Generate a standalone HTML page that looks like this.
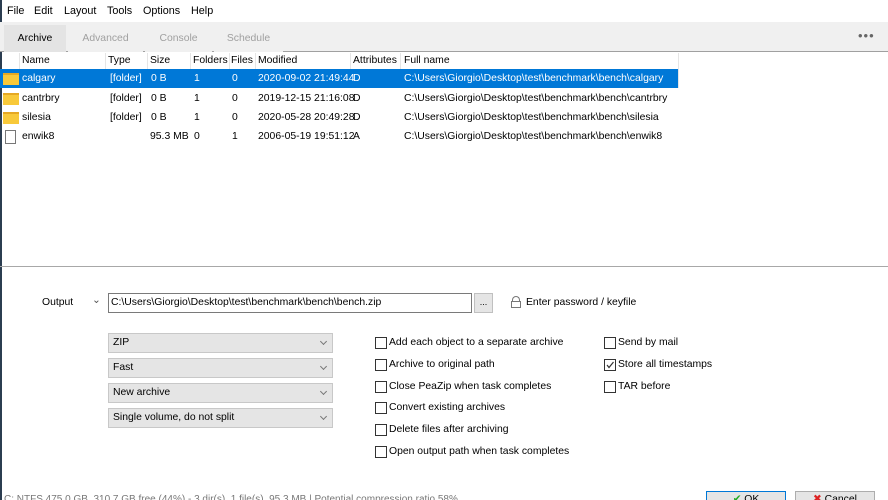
<!DOCTYPE html>
<html><head><meta charset="utf-8"><style>
*{margin:0;padding:0;box-sizing:border-box}
html,body{width:888px;height:500px;overflow:hidden}
body{background:#fff;font-family:"Liberation Sans",sans-serif;font-size:10.4px;color:#000;position:relative}
.a{position:absolute;white-space:nowrap}
.menu span{position:absolute;top:5px;font-size:10.8px}
.tabbar{position:absolute;left:0;top:22px;width:888px;height:30px;background:#f0f0f0;border-bottom:1px solid #a0a0a0}
.tab{position:absolute;top:3px;height:27px;background:#f0f0f0;color:#a0a0a0;text-align:center;line-height:28px}
.hdr{position:absolute;top:53px;height:16px;line-height:16px}
.sep{position:absolute;top:53px;width:1px;height:16px;background:#e5e5e5}
.row{position:absolute;left:0;height:19px;line-height:19px;width:678px}
.row span{position:absolute;white-space:nowrap}
.sel{background:#0078d7;color:#fff}
.fold{position:absolute;left:3px;top:4px;width:16px;height:12px;background:#f8c93a;border-top:2px solid #e5a823}
.dd{position:absolute;left:108px;width:225px;height:20px;background:#e5e5e5;border:1px solid #c8c8c8;line-height:18px;padding-left:4px}
.dd:after{content:"";position:absolute;right:6px;top:5px;width:4px;height:4px;border-right:1px solid #777;border-bottom:1px solid #777;transform:rotate(45deg)}
.cb{position:absolute;width:12px;height:12px;border:1px solid #333;background:#fff}
.cl{position:absolute;white-space:nowrap}
</style></head><body>
<div class="a" style="left:0;top:0;width:2px;height:500px;background:#2b3d50"></div>
<div class="menu"><span style="left:7px">File</span><span style="left:34px">Edit</span><span style="left:64px">Layout</span><span style="left:107px">Tools</span><span style="left:143px">Options</span><span style="left:191px">Help</span></div>
<div class="tabbar">
<div class="tab" style="left:4px;width:62px;background:#e4e4e4;color:#000">Archive</div>
<div class="tab" style="left:68px;width:75px">Advanced</div>
<div class="tab" style="left:145px;width:67px">Console</div>
<div class="tab" style="left:214px;width:69px">Schedule</div>
<div class="a" style="left:858px;top:6px;color:#666;font-size:13px;letter-spacing:1px">•••</div>
</div>
<div class="hdr" style="left:22px">Name</div><div class="hdr" style="left:108px">Type</div><div class="hdr" style="left:150px">Size</div><div class="hdr" style="left:193px">Folders</div><div class="hdr" style="left:231px">Files</div><div class="hdr" style="left:258px">Modified</div><div class="hdr" style="left:353px">Attributes</div><div class="hdr" style="left:404px">Full name</div>
<div class="sep" style="left:19px"></div><div class="sep" style="left:105px"></div><div class="sep" style="left:147px"></div><div class="sep" style="left:190px"></div><div class="sep" style="left:229px"></div><div class="sep" style="left:255px"></div><div class="sep" style="left:350px"></div><div class="sep" style="left:400px"></div>
<div class="a" style="left:678px;top:53px;width:1px;height:35px;background:#e5e5e5"></div>
<div class="row sel" style="top:69px"><i class="fold"></i><span style="left:22px">calgary</span><span style="left:110px">[folder]</span><span style="left:151px">0 B</span><span style="left:194px">1</span><span style="left:232px">0</span><span style="left:258px">2020-09-02 21:49:44</span><span style="left:353px">D</span><span style="left:404px">C:\Users\Giorgio\Desktop\test\benchmark\bench\calgary</span></div>
<div class="row" style="top:89px"><i class="fold"></i><span style="left:22px">cantrbry</span><span style="left:110px">[folder]</span><span style="left:151px">0 B</span><span style="left:194px">1</span><span style="left:232px">0</span><span style="left:258px">2019-12-15 21:16:08</span><span style="left:353px">D</span><span style="left:404px">C:\Users\Giorgio\Desktop\test\benchmark\bench\cantrbry</span></div>
<div class="row" style="top:108px"><i class="fold"></i><span style="left:22px">silesia</span><span style="left:110px">[folder]</span><span style="left:151px">0 B</span><span style="left:194px">1</span><span style="left:232px">0</span><span style="left:258px">2020-05-28 20:49:28</span><span style="left:353px">D</span><span style="left:404px">C:\Users\Giorgio\Desktop\test\benchmark\bench\silesia</span></div>
<div class="row" style="top:127px"><i style="position:absolute;left:5px;top:3px;width:11px;height:14px;border:1px solid #777;background:#fff"></i><span style="left:22px">enwik8</span><span style="left:150px">95.3 MB</span><span style="left:194px">0</span><span style="left:232px">1</span><span style="left:258px">2006-05-19 19:51:12</span><span style="left:353px">A</span><span style="left:404px">C:\Users\Giorgio\Desktop\test\benchmark\bench\enwik8</span></div>
<div class="a" style="left:0;top:266px;width:888px;height:1px;background:#a8a8a8"></div>
<div class="a" style="left:42px;top:297px">Output</div>
<div class="a" style="left:92px;top:294px;color:#555">&#x2304;</div>
<div class="a" style="left:108px;top:293px;width:364px;height:20px;border:1px solid #7a7a7a;line-height:18px;padding-left:2px">C:\Users\Giorgio\Desktop\test\benchmark\bench\bench.zip</div>
<div class="a" style="left:474px;top:293px;width:19px;height:20px;border:1px solid #c0c0c0;background:#e5e5e5;text-align:center;line-height:16px;font-size:9px">...</div>
<div class="a" style="left:512px;top:296px;width:8px;height:6px;border:1px solid #777;border-bottom:none;border-radius:4px 4px 0 0"></div>
<div class="a" style="left:511px;top:301px;width:10px;height:7px;border:1px solid #777"></div>
<div class="a" style="left:526px;top:297px">Enter password / keyfile</div>
<div class="dd" style="top:333px">ZIP</div>
<div class="dd" style="top:358px">Fast</div>
<div class="dd" style="top:383px">New archive</div>
<div class="dd" style="top:408px">Single volume, do not split</div>
<div class="cb" style="left:375px;top:337px"></div><div class="cl" style="left:389px;top:337px">Add each object to a separate archive</div>
<div class="cb" style="left:375px;top:359px"></div><div class="cl" style="left:389px;top:359px">Archive to original path</div>
<div class="cb" style="left:375px;top:381px"></div><div class="cl" style="left:389px;top:381px">Close PeaZip when task completes</div>
<div class="cb" style="left:375px;top:402px"></div><div class="cl" style="left:389px;top:402px">Convert existing archives</div>
<div class="cb" style="left:375px;top:424px"></div><div class="cl" style="left:389px;top:424px">Delete files after archiving</div>
<div class="cb" style="left:375px;top:446px"></div><div class="cl" style="left:389px;top:446px">Open output path when task completes</div>
<div class="cb" style="left:604px;top:337px"></div><div class="cl" style="left:618px;top:337px">Send by mail</div>
<div class="cb" style="left:604px;top:359px"><svg width="10" height="10" style="position:absolute;left:0;top:0"><path d="M2 5 L4 7.5 L8.5 2" fill="none" stroke="#333" stroke-width="1.2"/></svg></div><div class="cl" style="left:618px;top:359px">Store all timestamps</div>
<div class="cb" style="left:604px;top:381px"></div><div class="cl" style="left:618px;top:381px">TAR before</div>
<div class="a" style="left:4px;top:494px;color:#777;font-size:10px">C: NTFS 475.0 GB, 310.7 GB free (44%) - 3 dir(s), 1 file(s), 95.3 MB | Potential compression ratio 58%</div>
<div class="a" style="left:706px;top:491px;width:80px;height:22px;border:1px solid #0078d7;background:#e5e5e5;text-align:center;line-height:16px"><span style="color:#2a2">✔</span> OK</div>
<div class="a" style="left:795px;top:491px;width:80px;height:22px;border:1px solid #adadad;background:#e5e5e5;text-align:center;line-height:16px"><span style="color:#d22">✖</span> Cancel</div>
</body></html>
